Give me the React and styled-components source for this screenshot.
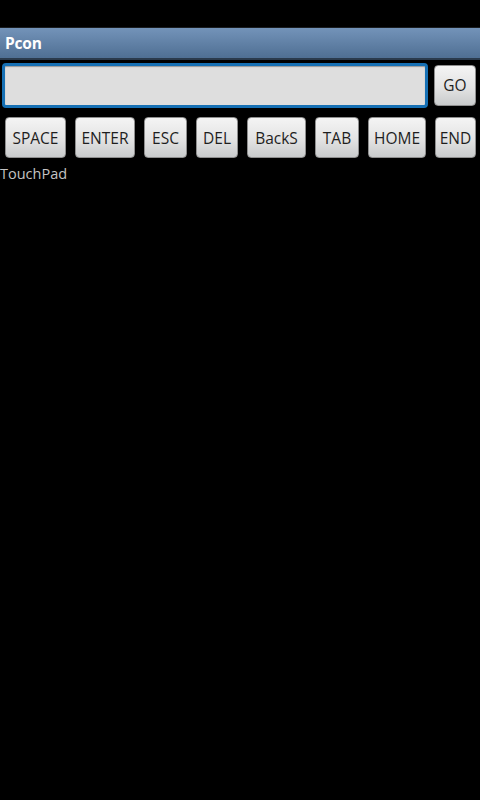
import React from 'react';
import styled, { createGlobalStyle } from 'styled-components';

const GlobalStyle = createGlobalStyle`
  html, body {
    margin: 0;
    padding: 0;
    background: #000;
  }
  #root {
    min-height: 800px;
  }
`;

const Screen = styled.div`
  width: 480px;
  height: 800px;
  background: #000;
  font-family: "Open Sans", "Noto Sans", sans-serif;
  overflow: hidden;
`;

const StatusBar = styled.div`
  height: 27px;
  background: #000;
  border-bottom: 1px solid #1a1d20;
`;

const TitleBar = styled.div`
  height: 30px;
  display: flex;
  align-items: center;
  padding: 0 5px;
  background: linear-gradient(#7393b9, #4f6f93);
  border-bottom: 2px solid #2a3a4c;
  color: #fff;
  font-weight: 700;
  font-size: 15.5px;
  letter-spacing: -0.2px;
`;

const InputRow = styled.div`
  display: flex;
  align-items: center;
  gap: 6px;
  padding: 1px 4px 0 2px;
  height: 48px;
`;

const TextBox = styled.div`
  flex: 1;
  height: 39px;
  border: 3px solid #1670b4;
  border-radius: 4px;
  background: #dedede;
  box-shadow: inset 0 1px 1px #9a9a9a;
`;

const Key = styled.div`
  flex-shrink: 0;
  box-sizing: border-box;
  width: ${(p) => p.$w}px;
  height: 41px;
  display: flex;
  align-items: center;
  justify-content: center;
  border-radius: 4px;
  border: 1px solid #8f8f8f;
  background: linear-gradient(#f4f4f4, #e3e3e3 55%, #c9cbcc);
  color: #1e1e1e;
  font-size: 15.5px;
  white-space: nowrap;
`;

const KeyRow = styled.div`
  display: flex;
  gap: 9px;
  padding: 8px 0 0 5px;
`;

const Label = styled.div`
  margin-top: 7px;
  color: #c4c4c4;
  font-size: 14.5px;
  line-height: 18px;
`;

const keys = [
  { label: 'SPACE', w: 61 },
  { label: 'ENTER', w: 60 },
  { label: 'ESC', w: 43 },
  { label: 'DEL', w: 42 },
  { label: 'BackS', w: 59 },
  { label: 'TAB', w: 44 },
  { label: 'HOME', w: 58 },
  { label: 'END', w: 41 },
];

const App = () => {
  return (
    <Screen>
      <GlobalStyle />
      <StatusBar />
      <TitleBar>Pcon</TitleBar>
      <InputRow>
        <TextBox />
        <Key $w={42}>GO</Key>
      </InputRow>
      <KeyRow>
        {keys.map((k) => (
          <Key key={k.label} $w={k.w}>{k.label}</Key>
        ))}
      </KeyRow>
      <Label>TouchPad</Label>
    </Screen>
  );
};

export default App;
